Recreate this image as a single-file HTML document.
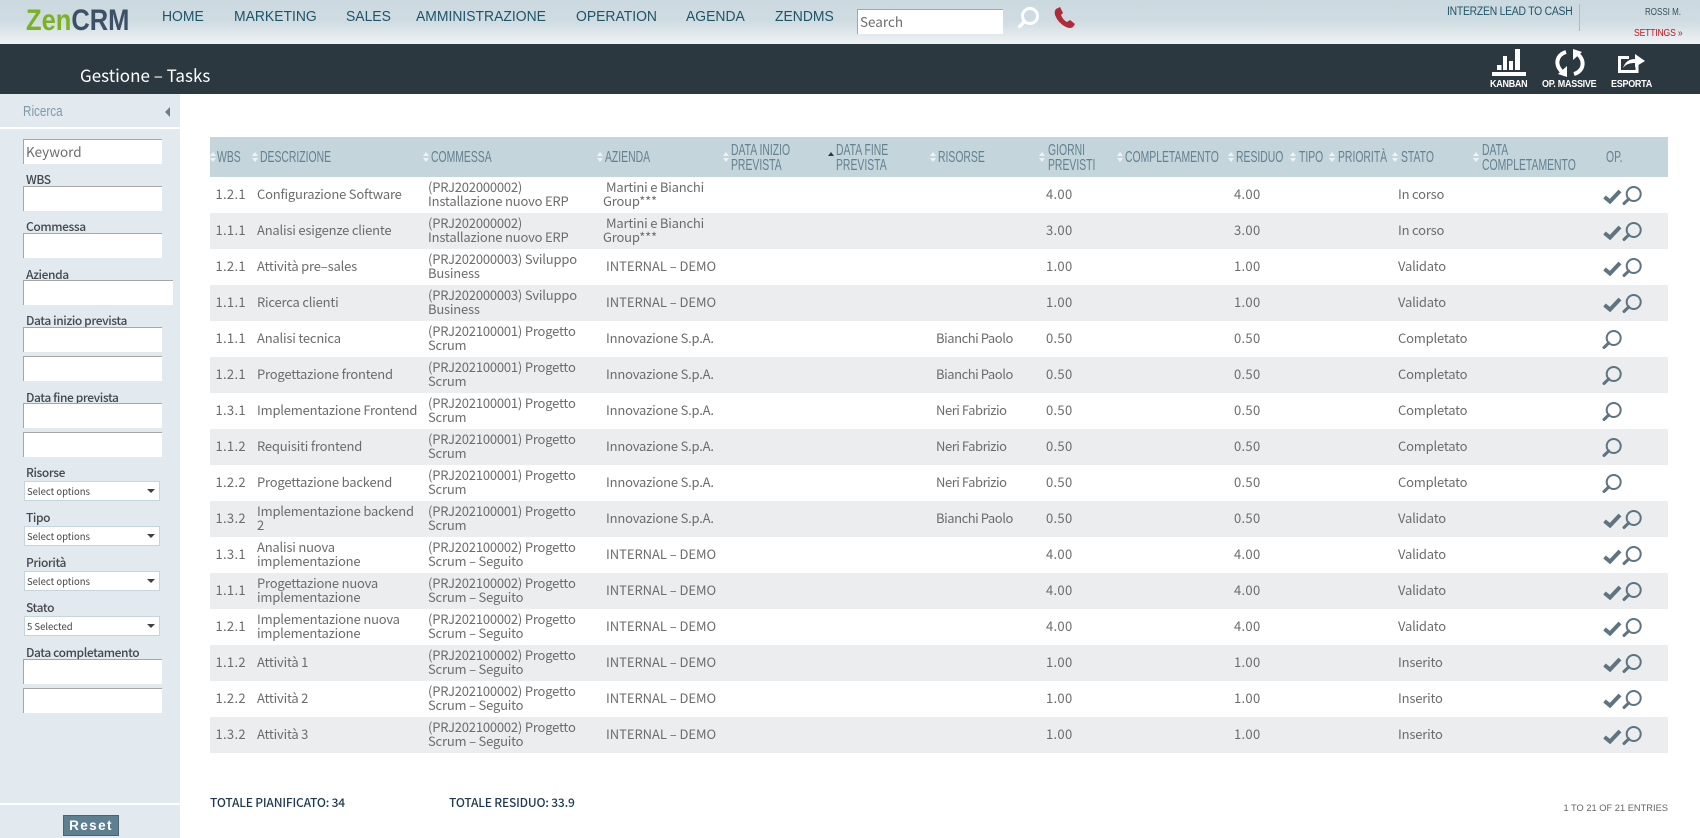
<!DOCTYPE html>
<html lang="it">
<head>
<meta charset="utf-8">
<title>Gestione - Tasks</title>
<style>
html,body{margin:0;padding:0;width:1700px;height:838px;overflow:hidden;background:#fff}
body{position:relative;font-family:"Noto Sans CJK JP","Liberation Sans",sans-serif;color:#666}
.a{position:absolute;white-space:nowrap}
#top{position:absolute;left:0;top:0;width:1700px;height:44px;background:linear-gradient(#cbd9e0 0,#cfdce2 50%,#f0f3f5 100%)}
#bar{position:absolute;left:0;top:44px;width:1700px;height:50px;background:#2c3840}
.nav{top:6px;font:14.5px/22px "Liberation Sans",sans-serif;color:#1d5468;transform:scaleX(.96);transform-origin:0 50%}
.logo{left:26px;top:3px;font:bold 30px/36px "Liberation Sans",sans-serif;transform:scaleX(.85);transform-origin:0 50%;color:#3d5166;letter-spacing:0}
.logo b{color:#7bb223}
.inp{position:absolute;background:#fff;border-top:1px solid #a6a6a6;border-left:1px solid #a6a6a6;box-sizing:border-box;height:25px;width:139px;left:23px;font-size:13.5px;line-height:23px;padding-left:2px;color:#6d6d6d}
.tw{font:11.5px/14px "Liberation Sans",sans-serif;color:#1d5468;transform:scaleX(.9);transform-origin:0 50%}
.lab{font:bold 10px/12px "Liberation Sans",sans-serif;color:#fff;top:79px;letter-spacing:-.3px;transform:scaleX(.9);transform-origin:0 50%}
#side{position:absolute;left:0;top:94px;width:180px;height:744px;background:#e2eaf0}
.line{position:absolute;left:0;width:180px;height:2px;background:#fff}
.sl{left:26px;font-size:12px;font-weight:500;line-height:16px;color:#44484d;letter-spacing:-.4px}
.sel{position:absolute;left:24px;width:136px;height:20px;box-sizing:border-box;background:#fff;border:1px solid #c5d5dc;font-size:9.5px;line-height:19px;padding-left:2px;color:#444}
.sel i{position:absolute;left:122px;top:7px;border:4px solid transparent;border-top:4px solid #443f3f;border-bottom:0}
#th{position:absolute;left:210px;top:137px;width:1458px;height:40px;background:#c4d5dc}
.h{font:16px/15px "Liberation Sans",sans-serif;color:#64818f;top:150px;transform:scaleX(.65);transform-origin:0 50%}
.h.two{top:142.5px}
.s{position:absolute;top:152px;width:7px;height:10px}
.s::before,.s::after{content:"";position:absolute;left:0;border-left:3.5px solid transparent;border-right:3.5px solid transparent}
.s::before{top:0;border-bottom:4px solid #eef4f6}
.s::after{top:6px;border-top:4px solid #eef4f6}
table{position:absolute;left:210px;top:177px;width:1458px;border-collapse:collapse;table-layout:fixed;font-size:13px;line-height:14px;color:#6c6c6c;letter-spacing:-.2px}
td{padding:0 0 2px 0;box-sizing:border-box;height:36px;vertical-align:middle;white-space:nowrap}
tr:nth-child(even){background:#ecedef}
td:first-child{padding-left:5.5px;letter-spacing:.3px}
td:nth-child(5){letter-spacing:-.45px}
td:nth-child(6),td:nth-child(7){letter-spacing:.3px}
td.az{text-indent:3px}
td.az.u{letter-spacing:-.05px}
td.az span{display:block;text-indent:0}
td:last-child{padding:0}
td svg{display:block;width:44px;height:24px;overflow:visible;margin-top:-3px}
</style>
</head>
<body>
<svg width="0" height="0" style="position:absolute">
<defs>
<symbol id="ck" viewBox="0 0 24 24" overflow="visible"><path d="M1.5 15 L7 19.5 L17 9" fill="none" stroke="#5e7480" stroke-width="4"/></symbol>
<symbol id="mg" viewBox="0 0 24 24" overflow="visible"><circle cx="12.7" cy="12" r="7" fill="none" stroke="#5e7480" stroke-width="2"/><path d="M7.7 17 L3 21.5" stroke="#5e7480" stroke-width="3" stroke-linecap="round"/></symbol>
</defs>
</svg>

<div id="top"></div>
<div class="a logo"><b>Zen</b>CRM</div>
<div class="a nav" style="left:162px">HOME</div>
<div class="a nav" style="left:234px">MARKETING</div>
<div class="a nav" style="left:346px">SALES</div>
<div class="a nav" style="left:416px">AMMINISTRAZIONE</div>
<div class="a nav" style="left:576px">OPERATION</div>
<div class="a nav" style="left:686px">AGENDA</div>
<div class="a nav" style="left:775px">ZENDMS</div>
<div class="inp" style="left:857px;top:9px;width:146px">Search</div>
<svg class="a" style="left:1016px;top:6px" width="24" height="24" viewBox="0 0 24 24"><circle cx="14" cy="10" r="7.5" fill="none" stroke="#fff" stroke-width="3"/><path d="M8.5 15.5 L3.5 20.5" stroke="#fff" stroke-width="3.5" stroke-linecap="round"/></svg>
<svg class="a" style="left:1053px;top:6px" width="24" height="24" viewBox="0 0 24 24"><path d="M3 3 Q1 5 2 9 Q5 17 13 21 Q17 23 20 21 L22 18 L17 14 L14 16 Q10 14 8 9 L10 7 L7 1 Z" fill="#b02a37"/></svg>
<div class="a tw" style="left:1447px;top:5px;letter-spacing:-.25px">INTERZEN LEAD TO CASH</div>
<div class="a" style="left:1579px;top:4px;width:1px;height:27px;background:#a9bcc4"></div>
<div class="a" style="left:1645px;top:7px;font:10px/12px 'Liberation Sans',sans-serif;color:#37505c;transform:scaleX(.8);transform-origin:0 50%">ROSSI M.</div>
<div class="a" style="left:1634px;top:28px;font:10px/12px 'Liberation Sans',sans-serif;color:#c4161c;letter-spacing:-.2px;transform:scaleX(.86);transform-origin:0 50%">SETTINGS »</div>

<div id="bar"></div>
<div class="a" style="left:80px;top:63px;font-size:17px;line-height:24px;color:#fff">Gestione – Tasks</div>
<svg class="a" style="left:1490px;top:46px" width="40" height="32" viewBox="0 0 40 32"><path d="M2 26h34v4H2zM7 19h4.5v5H7zM13 10h4v14h-4zM19 15h4v9h-4zM25 3h5v21h-5z" fill="#fff"/></svg>
<div class="a lab" style="left:1490px">KANBAN</div>
<svg class="a" style="left:1553px;top:47px" width="34" height="32" viewBox="0 0 34 32"><path d="M13 5 C6 7 3 13 5 19 C6 22 8 24 10 26" fill="none" stroke="#fff" stroke-width="4"/><path d="M14 19 L14 30 L5 27 Z" fill="#fff"/><path d="M21 27 C28 25 31 19 29 13 C28 10 26 8 24 6" fill="none" stroke="#fff" stroke-width="4"/><path d="M20 13 L20 2 L29 5 Z" fill="#fff"/></svg>
<div class="a lab" style="left:1542px">OP. MASSIVE</div>
<svg class="a" style="left:1616px;top:50px" width="32" height="26" viewBox="0 0 32 26"><path d="M13 7.5H3.5V21.5H21V15" fill="none" stroke="#fff" stroke-width="3"/><path d="M7 18 C9 12 13 9 19 9 V4 L29 11 L19 17 V13 C14 13 10 14 7 18 Z" fill="#fff"/></svg>
<div class="a lab" style="left:1611px">ESPORTA</div>

<div id="side">
  <div class="line" style="top:33px"></div>
  <div class="line" style="top:709px"></div>
</div>
<div class="a" style="left:23px;top:104px;font:15px/16px 'Liberation Sans',sans-serif;color:#7d9aa8;transform:scaleX(.78);transform-origin:0 50%">Ricerca</div>
<div class="a" style="left:165px;top:107px;border-top:5px solid transparent;border-bottom:5px solid transparent;border-right:5px solid #6a7f88"></div>

<div class="inp" style="top:139px">Keyword</div>
<div class="a sl" style="top:172px">WBS</div>
<div class="inp" style="top:186px"></div>
<div class="a sl" style="top:219px">Commessa</div>
<div class="inp" style="top:233px"></div>
<div class="a sl" style="top:267px">Azienda</div>
<div class="inp" style="top:280px;width:150px"></div>
<div class="a sl" style="top:313px">Data inizio prevista</div>
<div class="inp" style="top:327px"></div>
<div class="inp" style="top:356px"></div>
<div class="a sl" style="top:390px">Data fine prevista</div>
<div class="inp" style="top:403px"></div>
<div class="inp" style="top:432px"></div>
<div class="a sl" style="top:465px">Risorse</div>
<div class="sel" style="top:481px">Select options<i></i></div>
<div class="a sl" style="top:510px">Tipo</div>
<div class="sel" style="top:526px">Select options<i></i></div>
<div class="a sl" style="top:555px">Priorità</div>
<div class="sel" style="top:571px">Select options<i></i></div>
<div class="a sl" style="top:600px">Stato</div>
<div class="sel" style="top:616px">5 Selected<i></i></div>
<div class="a sl" style="top:645px">Data completamento</div>
<div class="inp" style="top:659px"></div>
<div class="inp" style="top:688px"></div>
<div class="a" style="left:63px;top:815px;width:56px;height:21px;box-sizing:border-box;background:#5e7f90;border:1px solid #476474;color:#fff;font:bold 13.5px/19px 'Liberation Sans',sans-serif;letter-spacing:1.4px;text-align:center">Reset</div>

<div id="th"></div>
<span class="s" style="left:210px"></span><div class="a h" style="left:217px">WBS</div>
<span class="s" style="left:252px"></span><div class="a h" style="left:260px">DESCRIZIONE</div>
<span class="s" style="left:423px"></span><div class="a h" style="left:431px">COMMESSA</div>
<span class="s" style="left:597px"></span><div class="a h" style="left:605px">AZIENDA</div>
<span class="s" style="left:723px"></span><div class="a h two" style="left:731px">DATA INIZIO<br>PREVISTA</div>
<div class="a" style="left:828px;top:152px;border-left:3.5px solid transparent;border-right:3.5px solid transparent;border-bottom:4px solid #2c3840"></div><div class="a h two" style="left:836px">DATA FINE<br>PREVISTA</div>
<span class="s" style="left:930px"></span><div class="a h" style="left:938px">RISORSE</div>
<span class="s" style="left:1039px"></span><div class="a h two" style="left:1048px">GIORNI<br>PREVISTI</div>
<span class="s" style="left:1117px"></span><div class="a h" style="left:1125px">COMPLETAMENTO</div>
<span class="s" style="left:1228px"></span><div class="a h" style="left:1236px">RESIDUO</div>
<span class="s" style="left:1290px"></span><div class="a h" style="left:1299px">TIPO</div>
<span class="s" style="left:1329px"></span><div class="a h" style="left:1338px">PRIORITÀ</div>
<span class="s" style="left:1392px"></span><div class="a h" style="left:1401px">STATO</div>
<span class="s" style="left:1473px"></span><div class="a h two" style="left:1482px">DATA<br>COMPLETAMENTO</div>
<div class="a h" style="left:1606px">OP.</div>

<table>
<colgroup><col style="width:47px"><col style="width:171px"><col style="width:175px"><col style="width:333px"><col style="width:110px"><col style="width:188px"><col style="width:164px"><col style="width:205px"><col style="width:65px"></colgroup>
<tr><td>1.2.1</td><td>Configurazione Software</td><td>(PRJ202000002)<br>Installazione nuovo ERP</td><td class="az">Martini e Bianchi<span>Group***</span></td><td></td><td>4.00</td><td>4.00</td><td>In corso</td><td><svg viewBox="0 0 44 24"><use href="#ck" width="24" height="24"/><use href="#mg" x="18" width="24" height="24"/></svg></td></tr>
<tr><td>1.1.1</td><td>Analisi esigenze cliente</td><td>(PRJ202000002)<br>Installazione nuovo ERP</td><td class="az">Martini e Bianchi<span>Group***</span></td><td></td><td>3.00</td><td>3.00</td><td>In corso</td><td><svg viewBox="0 0 44 24"><use href="#ck" width="24" height="24"/><use href="#mg" x="18" width="24" height="24"/></svg></td></tr>
<tr><td>1.2.1</td><td>Attività pre–sales</td><td>(PRJ202000003) Sviluppo<br>Business</td><td class="az u">INTERNAL – DEMO</td><td></td><td>1.00</td><td>1.00</td><td>Validato</td><td><svg viewBox="0 0 44 24"><use href="#ck" width="24" height="24"/><use href="#mg" x="18" width="24" height="24"/></svg></td></tr>
<tr><td>1.1.1</td><td>Ricerca clienti</td><td>(PRJ202000003) Sviluppo<br>Business</td><td class="az u">INTERNAL – DEMO</td><td></td><td>1.00</td><td>1.00</td><td>Validato</td><td><svg viewBox="0 0 44 24"><use href="#ck" width="24" height="24"/><use href="#mg" x="18" width="24" height="24"/></svg></td></tr>
<tr><td>1.1.1</td><td>Analisi tecnica</td><td>(PRJ202100001) Progetto<br>Scrum</td><td class="az">Innovazione S.p.A.</td><td>Bianchi Paolo</td><td>0.50</td><td>0.50</td><td>Completato</td><td><svg viewBox="0 0 44 24"><use href="#mg" x="-2" width="24" height="24"/></svg></td></tr>
<tr><td>1.2.1</td><td>Progettazione frontend</td><td>(PRJ202100001) Progetto<br>Scrum</td><td class="az">Innovazione S.p.A.</td><td>Bianchi Paolo</td><td>0.50</td><td>0.50</td><td>Completato</td><td><svg viewBox="0 0 44 24"><use href="#mg" x="-2" width="24" height="24"/></svg></td></tr>
<tr><td>1.3.1</td><td>Implementazione Frontend</td><td>(PRJ202100001) Progetto<br>Scrum</td><td class="az">Innovazione S.p.A.</td><td>Neri Fabrizio</td><td>0.50</td><td>0.50</td><td>Completato</td><td><svg viewBox="0 0 44 24"><use href="#mg" x="-2" width="24" height="24"/></svg></td></tr>
<tr><td>1.1.2</td><td>Requisiti frontend</td><td>(PRJ202100001) Progetto<br>Scrum</td><td class="az">Innovazione S.p.A.</td><td>Neri Fabrizio</td><td>0.50</td><td>0.50</td><td>Completato</td><td><svg viewBox="0 0 44 24"><use href="#mg" x="-2" width="24" height="24"/></svg></td></tr>
<tr><td>1.2.2</td><td>Progettazione backend</td><td>(PRJ202100001) Progetto<br>Scrum</td><td class="az">Innovazione S.p.A.</td><td>Neri Fabrizio</td><td>0.50</td><td>0.50</td><td>Completato</td><td><svg viewBox="0 0 44 24"><use href="#mg" x="-2" width="24" height="24"/></svg></td></tr>
<tr><td>1.3.2</td><td>Implementazione backend<br>2</td><td>(PRJ202100001) Progetto<br>Scrum</td><td class="az">Innovazione S.p.A.</td><td>Bianchi Paolo</td><td>0.50</td><td>0.50</td><td>Validato</td><td><svg viewBox="0 0 44 24"><use href="#ck" width="24" height="24"/><use href="#mg" x="18" width="24" height="24"/></svg></td></tr>
<tr><td>1.3.1</td><td>Analisi nuova<br>implementazione</td><td>(PRJ202100002) Progetto<br>Scrum – Seguito</td><td class="az u">INTERNAL – DEMO</td><td></td><td>4.00</td><td>4.00</td><td>Validato</td><td><svg viewBox="0 0 44 24"><use href="#ck" width="24" height="24"/><use href="#mg" x="18" width="24" height="24"/></svg></td></tr>
<tr><td>1.1.1</td><td>Progettazione nuova<br>implementazione</td><td>(PRJ202100002) Progetto<br>Scrum – Seguito</td><td class="az u">INTERNAL – DEMO</td><td></td><td>4.00</td><td>4.00</td><td>Validato</td><td><svg viewBox="0 0 44 24"><use href="#ck" width="24" height="24"/><use href="#mg" x="18" width="24" height="24"/></svg></td></tr>
<tr><td>1.2.1</td><td>Implementazione nuova<br>implementazione</td><td>(PRJ202100002) Progetto<br>Scrum – Seguito</td><td class="az u">INTERNAL – DEMO</td><td></td><td>4.00</td><td>4.00</td><td>Validato</td><td><svg viewBox="0 0 44 24"><use href="#ck" width="24" height="24"/><use href="#mg" x="18" width="24" height="24"/></svg></td></tr>
<tr><td>1.1.2</td><td>Attività 1</td><td>(PRJ202100002) Progetto<br>Scrum – Seguito</td><td class="az u">INTERNAL – DEMO</td><td></td><td>1.00</td><td>1.00</td><td>Inserito</td><td><svg viewBox="0 0 44 24"><use href="#ck" width="24" height="24"/><use href="#mg" x="18" width="24" height="24"/></svg></td></tr>
<tr><td>1.2.2</td><td>Attività 2</td><td>(PRJ202100002) Progetto<br>Scrum – Seguito</td><td class="az u">INTERNAL – DEMO</td><td></td><td>1.00</td><td>1.00</td><td>Inserito</td><td><svg viewBox="0 0 44 24"><use href="#ck" width="24" height="24"/><use href="#mg" x="18" width="24" height="24"/></svg></td></tr>
<tr><td>1.3.2</td><td>Attività 3</td><td>(PRJ202100002) Progetto<br>Scrum – Seguito</td><td class="az u">INTERNAL – DEMO</td><td></td><td>1.00</td><td>1.00</td><td>Inserito</td><td><svg viewBox="0 0 44 24"><use href="#ck" width="24" height="24"/><use href="#mg" x="18" width="24" height="24"/></svg></td></tr>
</table>

<div class="a" style="left:210px;top:795px;font-size:12px;font-weight:500;line-height:16px;color:#1f3a50;letter-spacing:-.18px">TOTALE PIANIFICATO: 34</div>
<div class="a" style="left:449px;top:795px;font-size:12px;font-weight:500;line-height:16px;color:#1f3a50;letter-spacing:-.18px">TOTALE RESIDUO: 33.9</div>
<div class="a" style="right:32px;top:801px;font:9.3px/14px 'Liberation Sans',sans-serif;color:#666">1 TO 21 OF 21 ENTRIES</div>
</body>
</html>
